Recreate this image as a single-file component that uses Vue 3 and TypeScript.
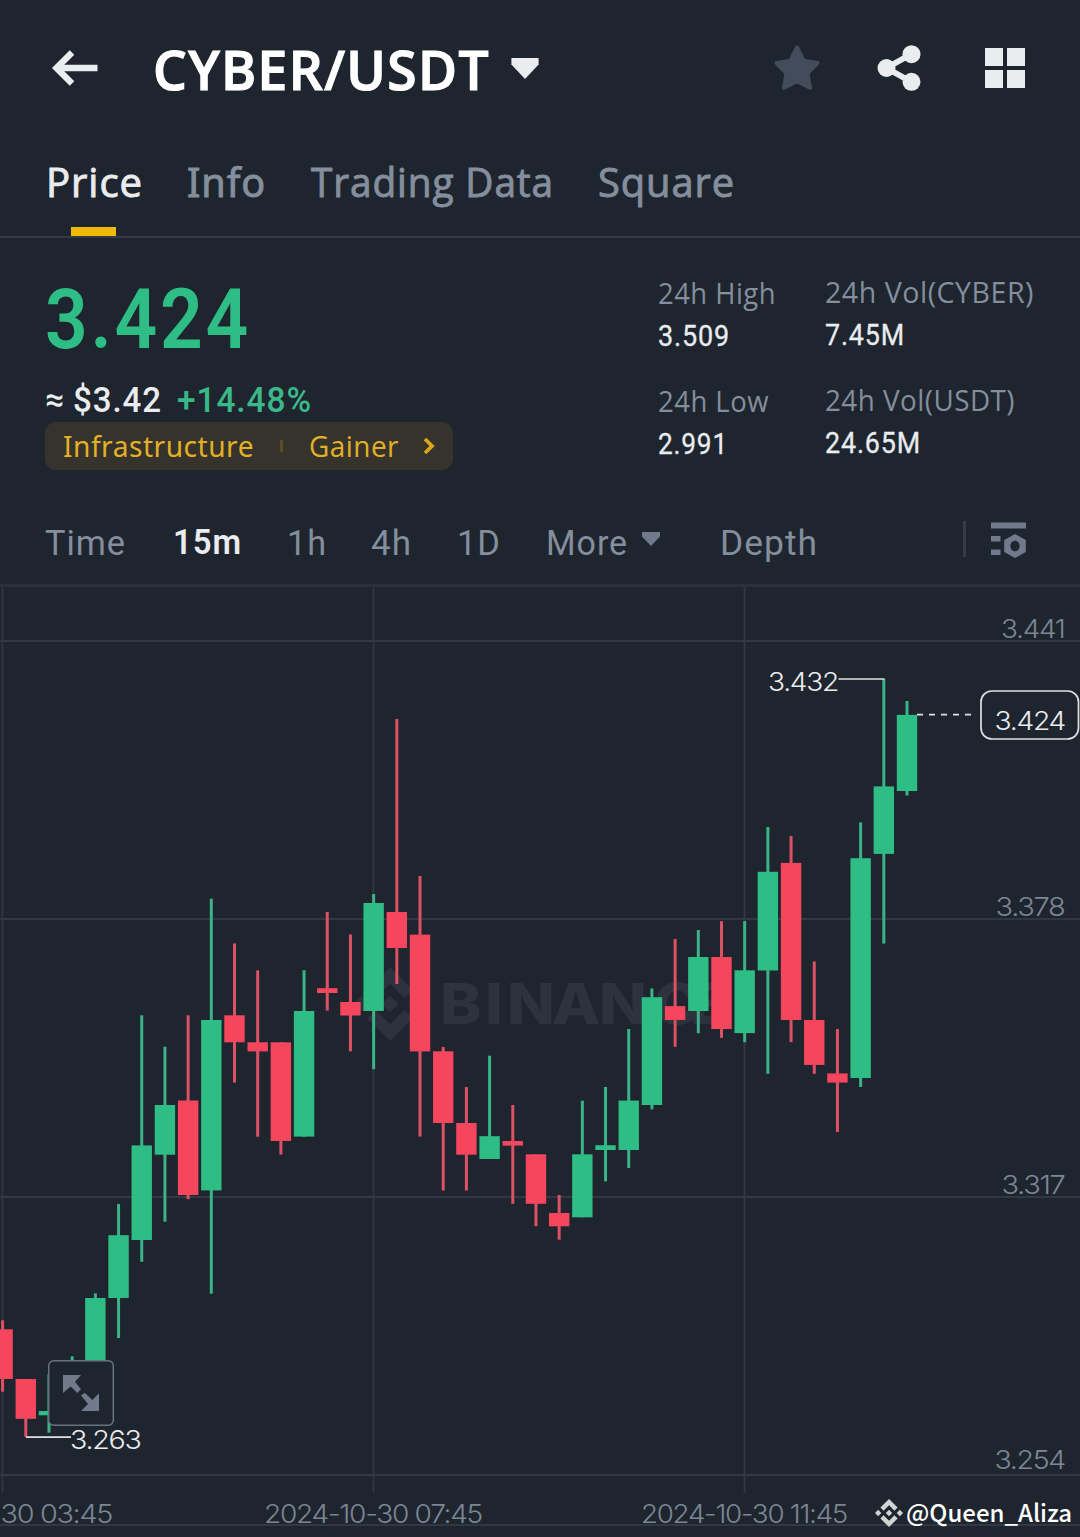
<script setup lang="ts">
import { h, type FunctionalComponent } from 'vue'

interface LabelProps {
  text: string
  w: number
  size: number
  line?: number
}

/* One line of text fitted to a fixed width and centred on its cap height. */
const Label: FunctionalComponent<LabelProps> = (props) => {
  const line = props.line ?? 42
  return h('svg', { width: props.w, height: line, class: 'label' }, [
    h(
      'text',
      {
        x: 0,
        y: line / 2 + props.size * 0.357,
        'font-size': props.size,
        textLength: props.w,
        lengthAdjust: 'spacingAndGlyphs',
        fill: 'currentColor',
      },
      props.text,
    ),
  ])
}
Label.props = ['text', 'w', 'size', 'line']

type Candle = [up: 0 | 1, high: number, top: number, bottom: number, low: number]

const candles: Candle[] = [
  [0, 1320.3, 1329.3, 1379, 1391.7],
  [0, 1379, 1379, 1418.8, 1437],
  [1, 1374.3, 1411, 1415.3, 1432.7],
  [1, 1356.3, 1362, 1411, 1415],
  [1, 1293.4, 1298, 1370, 1376],
  [1, 1204, 1235.2, 1298, 1338],
  [1, 1015.3, 1145.4, 1240, 1261.8],
  [1, 1046.7, 1105, 1154.7, 1221.7],
  [0, 1015.3, 1100.5, 1195, 1199.2],
  [1, 898.7, 1020, 1190.4, 1293.7],
  [0, 943.4, 1015.3, 1042.3, 1082.6],
  [0, 970.3, 1042.3, 1051.4, 1136.7],
  [0, 1042.3, 1042.3, 1141, 1154.6],
  [1, 970.3, 1011, 1136.6, 1136.6],
  [0, 912, 988.2, 993, 1010.6],
  [0, 934.4, 1002, 1015.5, 1051.3],
  [1, 894, 903, 1011, 1069.2],
  [0, 719, 912, 948, 984],
  [0, 876, 934.6, 1051.4, 1136.6],
  [0, 1047, 1051.3, 1123, 1190.5],
  [0, 1087, 1123, 1154.7, 1190.5],
  [1, 1055.7, 1136.2, 1159, 1159],
  [0, 1105, 1141, 1145.6, 1203.8],
  [0, 1154.3, 1154.3, 1203.8, 1226.2],
  [0, 1195, 1213, 1226.3, 1239.7],
  [1, 1100.7, 1154.3, 1217.3, 1217.3],
  [1, 1087, 1145.2, 1150, 1181.4],
  [1, 1029, 1100.6, 1150, 1168],
  [1, 988.4, 997.2, 1105, 1109.4],
  [0, 939, 1006.1, 1020, 1046.7],
  [1, 930, 957, 1011, 1033.2],
  [0, 921.2, 957, 1029, 1037.8],
  [1, 921.2, 970.3, 1033.1, 1042.2],
  [1, 827, 871.8, 970.5, 1073.8],
  [0, 836, 862.9, 1020, 1042.2],
  [0, 961.4, 1020, 1064.9, 1073.8],
  [0, 1029, 1073.4, 1082.6, 1132],
  [1, 822.4, 858.2, 1078, 1087],
  [1, 679, 786.4, 853.9, 943.6],
  [1, 701, 714.9, 791, 795.5],
]
const cx = (i: number): number => 2.6 + i * 23.19

const gridX = [2.5, 373.5, 744.5]
const gridY = [641, 919, 1197, 1475, 1525]

interface ChartText {
  text: string
  x: number
  y: number
  w: number
}
const axis: ChartText[] = [
  { text: '3.441', x: 1001, y: 638, w: 63.5 },
  { text: '3.378', x: 995.5, y: 916, w: 69 },
  { text: '3.317', x: 1001.5, y: 1194, w: 63 },
  { text: '3.254', x: 994.5, y: 1469, w: 70.5 },
  { text: '30 03:45', x: 0.5, y: 1522.7, w: 111.5 },
  { text: '2024-10-30 07:45', x: 264, y: 1522.7, w: 218 },
  { text: '2024-10-30 11:45', x: 641, y: 1522.7, w: 206 },
]
const marks: ChartText[] = [
  { text: '3.432', x: 768, y: 691, w: 70 },
  { text: '3.424', x: 994.5, y: 730, w: 70.5 },
  { text: '3.263', x: 70, y: 1448.7, w: 70.5 },
]

const logo =
  'M38.73 53.2l24.59-24.58 24.6 24.6 14.3-14.31L63.32 0 24.43 38.9zM0 63.31l14.3-14.31 14.31 14.31-14.31 14.3zM38.73 73.41L63.32 98l24.6-24.6 14.31 14.29-38.91 38.91L24.42 87.7zM98 63.31L112.3 49l14.31 14.31-14.31 14.3zM77.83 63.3L63.32 48.78 48.79 63.3l14.53 14.52z'
</script>

<template>
  <main class="screen">
    <header class="top">
      <svg class="back" width="46" height="36" viewBox="0 0 46 36">
        <path d="M3 18H45.5M20 2.5L4.5 18L20 33.5" fill="none" stroke="#eaecef" stroke-width="6.4" />
      </svg>
      <Label class="title" text="CYBER/USDT" :w="337" :size="54" :line="70" />
      <svg class="caret" width="28" height="21" viewBox="0 0 28 21">
        <path d="M.4 0H27.6V6.5L14 21L.4 6.5z" fill="#eaecef" />
      </svg>
      <div class="actions">
        <svg width="46" height="46" viewBox="0 0 46 46">
          <path
            d="M23 2.5L29.6 15.7L43.5 18L33.6 28.2L36 42.8L23 36.2L10 42.8L12.4 28.2L2.5 18L16.4 15.7z"
            fill="#434c5a"
            stroke="#434c5a"
            stroke-width="4"
            stroke-linejoin="round"
          />
        </svg>
        <svg width="44" height="46" viewBox="0 0 44 46">
          <path d="M34.5 9L9.5 23L34.5 37" fill="none" stroke="#eaecef" stroke-width="6" />
          <g fill="#eaecef">
            <circle cx="34.5" cy="9.2" r="9" />
            <circle cx="9.5" cy="23" r="9" />
            <circle cx="34.5" cy="36.8" r="9" />
          </g>
        </svg>
        <svg width="40" height="40" viewBox="0 0 40 40">
          <path d="M0 0H18V18H0zM22 0H40V18H22zM0 22H18V40H0zM22 22H40V40H22z" fill="#eaecef" />
        </svg>
      </div>
    </header>

    <nav class="tabs">
      <a class="tab on"><Label text="Price" :w="97" :size="39.5" :line="60" /></a>
      <a class="tab info"><Label text="Info" :w="79" :size="39.5" :line="60" /></a>
      <a class="tab"><Label text="Trading Data" :w="243" :size="39.5" :line="60" /></a>
      <a class="tab"><Label text="Square" :w="137" :size="39.5" :line="60" /></a>
    </nav>

    <section class="summary">
      <div class="quote">
        <Label class="last" text="3.424" :w="206" :size="83" :line="104" />
        <div class="change">
          <Label text="≈" :w="20" :size="34" />
          <Label class="fiat" text="$3.42" :w="89" :size="35.5" />
          <Label class="pct" text="+14.48%" :w="135" :size="35.5" />
        </div>
        <div class="tag">
          <Label class="infra" text="Infrastructure" :w="191" :size="28.5" />
          <i></i>
          <Label text="Gainer" :w="90" :size="28.5" />
          <svg class="chev" width="12" height="18" viewBox="0 0 12 18">
            <path d="M2 2L9 9L2 16" fill="none" stroke="#dba51c" stroke-width="3.8" />
          </svg>
        </div>
      </div>
      <div class="stats">
        <div>
          <Label text="24h High" :w="118" :size="29" />
          <Label class="val" text="3.509" :w="72" :size="29" />
          <Label class="low" text="24h Low" :w="111" :size="29" />
          <Label class="val" text="2.991" :w="70" :size="29" />
        </div>
        <div class="vol">
          <Label text="24h Vol(CYBER)" :w="209" :size="29" />
          <Label class="val" text="7.45M" :w="80" :size="29" />
          <Label class="low" text="24h Vol(USDT)" :w="190" :size="29" />
          <Label class="val" text="24.65M" :w="96" :size="29" />
        </div>
      </div>
    </section>

    <nav class="frames">
      <Label text="Time" :w="81" :size="34.7" />
      <Label class="active" text="15m" :w="69" :size="34.7" />
      <Label class="f1h" text="1h" :w="40" :size="34.7" />
      <Label class="f4h" text="4h" :w="41" :size="34.7" />
      <Label class="f1d" text="1D" :w="44" :size="34.7" />
      <Label class="more" text="More" :w="82" :size="34.7" />
      <svg class="drop" width="18" height="14" viewBox="0 0 18 14">
        <path d="M0 0H18V4.5L9 14L0 4.5z" fill="#707a8a" />
      </svg>
      <Label class="depth" text="Depth" :w="98" :size="34.7" />
      <b class="bar"></b>
      <svg class="config" width="36" height="36" viewBox="0 0 36 36">
        <path d="M0 .5H35V6.5H0zM0 14H9.5V19.5H0zM0 27.5H9.5V33H0z" fill="#707a8a" />
        <path
          d="M24 12L34.8 18V30L24 36L13.2 30V18zM24 18.8a4.7 5.2 0 1 0 0 10.4a4.7 5.2 0 1 0 0-10.4z"
          fill="#707a8a"
          fill-rule="evenodd"
        />
      </svg>
    </nav>

    <svg class="chart" width="1080" height="950" viewBox="0 587 1080 950">
      <g stroke="#323843" stroke-width="1.8">
        <line v-for="x in gridX" :key="x" :x1="x" :x2="x" y1="587" y2="1493" />
        <line v-for="y in gridY" :key="y" x1="0" x2="1080" :y1="y" :y2="y" />
      </g>

      <g fill="#2d323d">
        <path :d="logo" transform="translate(353 967) scale(.5845)" />
        <text class="brand" transform="scale(1.1 1)" x="400 440.9 460.9 501.8 544.5 594.1 627.3" y="1024.5">BINANCE</text>
      </g>

      <g v-for="(c, i) in candles" :key="i" :class="c[0] ? 'up' : 'down'">
        <rect class="wick" :x="cx(i) - 1.5" :y="c[1]" width="3" :height="c[4] - c[1]" />
        <rect :x="cx(i) - 10.2" :y="c[2]" width="20.4" :height="c[3] - c[2]" />
      </g>

      <g fill="none" stroke="#dfe1e5" stroke-width="1.7">
        <path d="M838.5 679H884.5M26 1437.2H71" />
        <path d="M917 714.6H973" stroke-dasharray="6 6" />
        <rect x="981" y="691" width="97.5" height="48" rx="11" fill="#1e252f" />
      </g>

      <g class="num" fill="#7d8694">
        <text v-for="t in axis" :key="t.text" :x="t.x" :y="t.y" :textLength="t.w" lengthAdjust="spacingAndGlyphs">{{ t.text }}</text>
      </g>
      <g class="num" fill="#eaecef">
        <text v-for="t in marks" :key="t.text" :x="t.x" :y="t.y" :textLength="t.w" lengthAdjust="spacingAndGlyphs">{{ t.text }}</text>
      </g>

      <rect x="48.7" y="1360.7" width="64.6" height="64.6" rx="5" fill="#1e252f" stroke="#6a7280" stroke-width="1.5" />
      <path
        d="M63 1375H81L75 1381.7L81 1389.3L77.3 1393L70.7 1386.6L63 1393zM99 1411H81L88 1404L81 1395.5L84.7 1392.7L92.3 1400L99 1393.3z"
        fill="#707a8a"
      />

      <path :d="logo" transform="translate(875 1499) scale(.2212)" fill="#d2d3d5" />
      <text class="author" x="906" y="1521.8" textLength="166" lengthAdjust="spacingAndGlyphs">@Queen_Aliza</text>
    </svg>
  </main>
</template>

<style>
body {
  margin: 0;
  background: #1e252f;
}
</style>

<style scoped>
.screen {
  width: 1080px;
  height: 1537px;
  overflow: hidden;
  background: #1e252f;
  color: #848e9c;
  font-family: 'Open Sans', 'Noto Sans', sans-serif;
  letter-spacing: 0.5px;
}
svg {
  display: block;
  flex: none;
  overflow: visible;
}
.top {
  display: flex;
  align-items: center;
  box-sizing: border-box;
  height: 136px;
  padding: 0 55px 0 52px;
}
.title {
  margin: 5px 0 0 55px;
  color: #fff;
  font-weight: 600;
  letter-spacing: 1.4px;
  stroke: currentColor;
  stroke-width: 1.2px;
}
.caret {
  margin-left: 21px;
}
.actions {
  display: flex;
  align-items: center;
  margin-left: auto;
}
.actions svg + svg {
  margin-left: 57px;
}
.actions svg + svg + svg {
  margin-left: 64px;
}
.tabs {
  display: flex;
  align-items: center;
  gap: 44px;
  box-sizing: border-box;
  height: 102px;
  padding: 0 46px 6px;
  border-bottom: 2px solid #343a45;
  letter-spacing: 0.9px;
}
.tab .label {
  stroke: currentColor;
  stroke-width: 0.9px;
}
.tab {
  position: relative;
}
.info {
  margin-right: 1px;
  font-family: 'Noto Sans', sans-serif;
}
.on {
  color: #eaecef;
}
.on::after {
  content: '';
  position: absolute;
  left: 25px;
  bottom: -23px;
  width: 45px;
  height: 9px;
  background: #f0b90b;
}
.summary {
  display: flex;
  height: 260px;
}
.quote {
  width: 613px;
  padding: 28px 0 0 45px;
}
.last {
  color: #2ebd85;
  font-family: Roboto, sans-serif;
  font-weight: 600;
  letter-spacing: 3px;
}
.change {
  display: flex;
  align-items: center;
  box-sizing: border-box;
  height: 52px;
  padding-top: 5px;
  color: #eaecef;
  font-family: Roboto, sans-serif;
  font-weight: 500;
  letter-spacing: 1px;
}
.fiat {
  margin-left: 8px;
}
.pct {
  margin-left: 15px;
  color: #3bb88a;
}
.tag {
  display: flex;
  align-items: center;
  box-sizing: border-box;
  width: 408px;
  height: 48px;
  padding: 1px 0 0 18px;
  border-radius: 11px;
  background: #35332b;
  color: #e3b127;
}
.infra {
  font-family: 'Noto Sans', sans-serif;
}
.tag i {
  width: 3px;
  height: 12px;
  margin: -1px 26px 0 26px;
  background: #5d4d26;
}
.chev {
  margin: -2px 0 0 24px;
}
.stats {
  display: flex;
  padding-top: 35px;
}
.stats > div {
  width: 167px;
}
.stats .vol {
  margin-top: -1px;
}
.val {
  color: #eaecef;
  font-family: Roboto, sans-serif;
  stroke: currentColor;
  stroke-width: 0.3px;
  letter-spacing: 0.9px;
}
.low {
  margin-top: 24px;
}
.frames {
  display: flex;
  align-items: center;
  box-sizing: border-box;
  height: 89px;
  padding: 3px 0 0 45px;
  border-bottom: 3px solid #2b313c;
  font-family: Roboto, sans-serif;
  letter-spacing: 1px;
}
.active {
  margin: -2px 0 0 47px;
  color: #eaecef;
  font-weight: 600;
}
.f1h {
  margin-left: 45px;
}
.f4h {
  margin-left: 44px;
}
.f1d {
  margin-left: 45px;
}
.more {
  margin-left: 45px;
}
.drop {
  margin: -8px 0 0 14px;
}
.depth {
  margin-left: 60px;
}
.bar {
  width: 3px;
  height: 36px;
  margin: -7px 0 0 145px;
  background: #343a46;
}
.config {
  margin: -6px 0 0 25px;
}
.up {
  fill: #2ebd85;
}
.up .wick {
  fill: #3cb386;
}
.down {
  fill: #f6465d;
}
.down .wick {
  fill: #dd5165;
}
.num {
  font: 300 26px Inter, sans-serif;
  letter-spacing: -1.2px;
}
.brand {
  font: 800 57px Inter, sans-serif;
  letter-spacing: 0;
}
.author {
  fill: #fff;
  font: 500 24px 'Noto Sans CJK SC', sans-serif;
  letter-spacing: 0;
}
</style>
